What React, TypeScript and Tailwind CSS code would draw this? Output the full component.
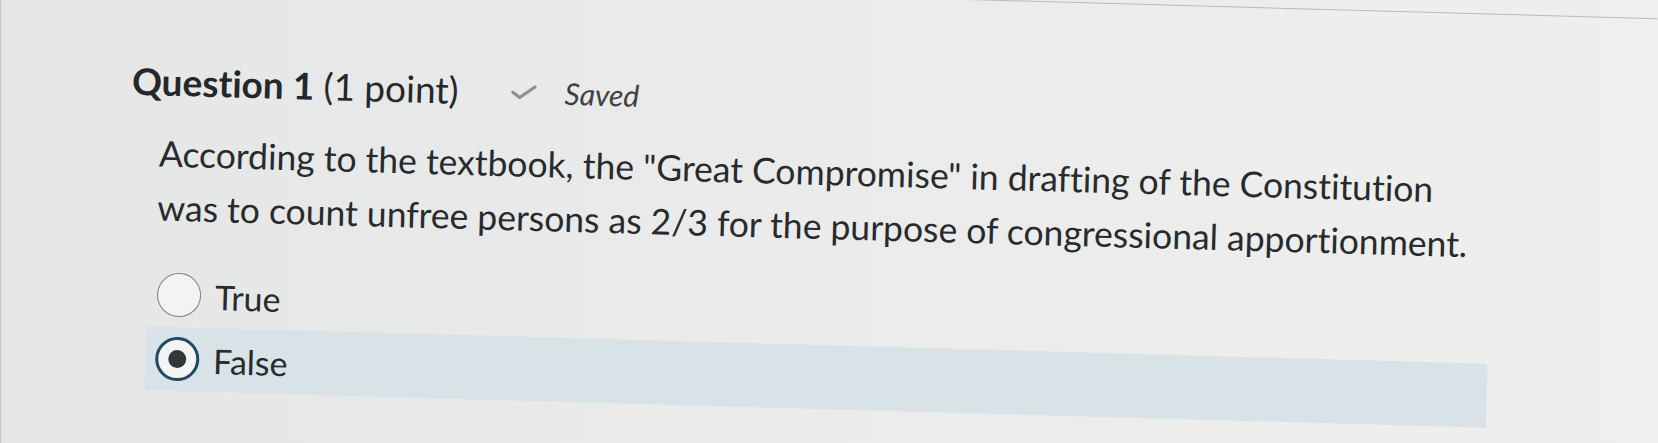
import { useState } from 'react';

type Choice = 'true' | 'false';

const choices: { value: Choice; label: string }[] = [
  { value: 'true', label: 'True' },
  { value: 'false', label: 'False' },
];

function Radio({ checked }: { checked: boolean }) {
  if (checked) {
    return (
      <span className="flex h-[44px] w-[44px] shrink-0 items-center justify-center rounded-full border-[3px] border-[#1f4a66] bg-[#f3f4f4]">
        <span className="h-[18px] w-[18px] rounded-full bg-[#33373a]" />
      </span>
    );
  }
  return <span className="h-[44px] w-[44px] shrink-0 rounded-full border-[1.5px] border-[#7d8183] bg-[#f2f3f3]" />;
}

export default function App() {
  const [answer, setAnswer] = useState<Choice>('false');

  return (
    <div className="h-[443px] w-[1658px] overflow-hidden border-l border-[#c4c7c6] bg-gradient-to-r from-[#e5e7e6] via-[#eaebea] to-[#eff0ee] font-['Lato',sans-serif] text-[#272b2d] [font-variant-ligatures:none]">
      <div className="mt-[-28px] origin-top-left rotate-[1.6deg] border-t border-[#b8bbbb] pl-[134px] pt-[81px]">
        <div className="flex items-center">
          <h2 className="text-[37px] leading-[46px] text-[#24282a]">
            <span className="font-bold">Question 1</span> (1 point)
          </h2>
          <svg className="ml-[52px] h-[15px] w-[26px]" viewBox="0 0 26 15" fill="none">
            <polyline points="2,8 9,13 24,2" stroke="#8d9192" strokeWidth="3.2" strokeLinecap="round" strokeLinejoin="round" />
          </svg>
          <span className="ml-[28px] text-[30px] italic text-[#3d4143]">Saved</span>
        </div>

        <p className="mt-[22px] w-[1340px] pl-[29px] text-[35.5px] leading-[54px]">
          According to the textbook, the "Great Compromise" in drafting of the Constitution was to count unfree persons as
          2/3 for the purpose of congressional apportionment.
        </p>

        <div className="ml-[21px] mt-[28px] w-[1342px]">
          {choices.map((c) => (
            <label
              key={c.value}
              onClick={() => setAnswer(c.value)}
              className={`flex h-[64px] cursor-pointer items-center gap-[14px] pl-[10px] text-[34px] ${answer === c.value ? 'bg-[#d9e2e7]' : ''}`}
            >
              <Radio checked={answer === c.value} />
              <span>{c.label}</span>
            </label>
          ))}
        </div>
      </div>
    </div>
  );
}
